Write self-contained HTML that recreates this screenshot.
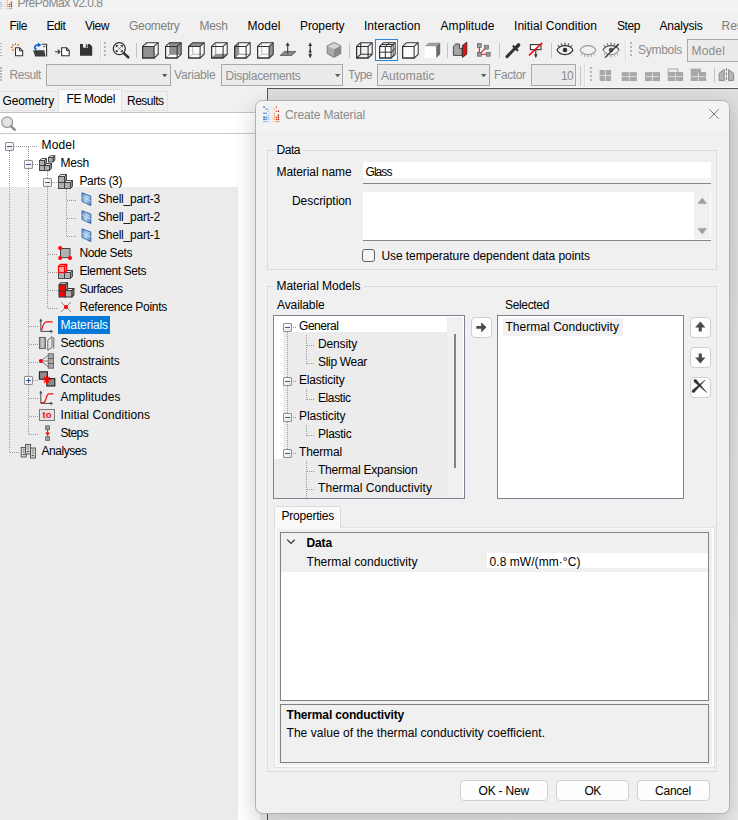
<!DOCTYPE html>
<html lang="en"><head><meta charset="utf-8"><title>PrePoMax v2.0.8</title>
<style>
html,body{margin:0;padding:0;}
body{width:738px;height:820px;overflow:hidden;background:#f0f0f0;position:relative;font-family:"Liberation Sans", sans-serif;font-size:12px;}
.b{position:absolute;box-sizing:border-box;}
.t{position:absolute;white-space:pre;line-height:16px;font-size:12px;}
</style></head>
<body>
<div class="b" style="left:0px;top:0px;width:738px;height:14px;background:#f3f3f3;"></div>
<span class="t" style="left:17.5px;top:-5.5px;color:#868686;letter-spacing:-0.470px;">PrePoMax v2.0.8</span>
<span class="t" style="left:9.5px;top:18px;color:#000;letter-spacing:-0.461px;">File</span>
<span class="t" style="left:46.5px;top:18px;color:#000;letter-spacing:-0.422px;">Edit</span>
<span class="t" style="left:85px;top:18px;color:#000;letter-spacing:-0.449px;">View</span>
<span class="t" style="left:129px;top:18px;color:#7f7f7f;letter-spacing:-0.273px;">Geometry</span>
<span class="t" style="left:199.5px;top:18px;color:#7f7f7f;letter-spacing:-0.336px;">Mesh</span>
<span class="t" style="left:247.5px;top:18px;color:#000;letter-spacing:0.062px;">Model</span>
<span class="t" style="left:300px;top:18px;color:#000;letter-spacing:-0.107px;">Property</span>
<span class="t" style="left:364px;top:18px;color:#000;letter-spacing:0.041px;">Interaction</span>
<span class="t" style="left:440.5px;top:18px;color:#000;letter-spacing:0.069px;">Amplitude</span>
<span class="t" style="left:514px;top:18px;color:#000;letter-spacing:0.055px;">Initial Condition</span>
<span class="t" style="left:617px;top:18px;color:#000;letter-spacing:-0.422px;">Step</span>
<span class="t" style="left:659.5px;top:18px;color:#000;letter-spacing:-0.211px;">Analysis</span>
<span class="t" style="left:721.5px;top:18px;color:#7f7f7f;letter-spacing:-0.002px;">Results</span>
<span class="t" style="left:9.5px;top:67px;color:#8c8c8c;letter-spacing:-0.419px;">Result</span>
<div class="b" style="left:46px;top:64px;width:125px;height:22px;background:#ebebeb;border:1px solid #a9a9a9;"></div>
<span class="t" style="left:174px;top:67px;color:#8c8c8c;letter-spacing:-0.205px;">Variable</span>
<div class="b" style="left:221px;top:64px;width:122px;height:22px;background:#ebebeb;border:1px solid #a9a9a9;"></div>
<span class="t" style="left:225.5px;top:68px;color:#8c8c8c;letter-spacing:-0.285px;">Displacements</span>
<span class="t" style="left:348px;top:67px;color:#8c8c8c;letter-spacing:-0.504px;">Type</span>
<div class="b" style="left:377px;top:64px;width:113px;height:22px;background:#ebebeb;border:1px solid #a9a9a9;"></div>
<span class="t" style="left:381px;top:68px;color:#8c8c8c;letter-spacing:0.016px;">Automatic</span>
<span class="t" style="left:494px;top:67px;color:#8c8c8c;letter-spacing:-0.419px;">Factor</span>
<div class="b" style="left:531px;top:64px;width:45px;height:22px;background:#ebebeb;border:1px solid #a9a9a9;"></div>
<span class="t" style="left:561px;top:68px;color:#8c8c8c;letter-spacing:-0.680px;">10</span>
<span class="t" style="left:638px;top:42px;color:#8c8c8c;letter-spacing:-0.288px;">Symbols</span>
<div class="b" style="left:687px;top:39px;width:60px;height:23px;background:#ebebeb;border:1px solid #a9a9a9;"></div>
<span class="t" style="left:691.5px;top:43px;color:#8c8c8c;letter-spacing:0.163px;">Model</span>
<div class="b" style="left:267px;top:87px;width:480px;height:1px;background:#fafafa;"></div>
<div class="b" style="left:267px;top:88px;width:480px;height:740px;background:linear-gradient(#dedede,#e5e5e5 50%,#ececec);border:1px solid #555;"></div>
<div class="b" style="left:-1px;top:91px;width:60px;height:20px;background:#f0f0f0;border:1px solid #e2e2e2;"></div>
<div class="b" style="left:121px;top:91px;width:47px;height:20px;background:#f0f0f0;border:1px solid #e2e2e2;"></div>
<div class="b" style="left:0px;top:112px;width:267px;height:1px;background:#c4c4c4;"></div>
<div class="b" style="left:58px;top:89px;width:64px;height:22.5px;background:#fafafa;border:1px solid #e0e0e0;border-bottom:none;"></div>
<span class="t" style="left:2.5px;top:93px;color:#000;letter-spacing:-0.148px;">Geometry</span>
<span class="t" style="left:66.5px;top:90.5px;color:#000;letter-spacing:-0.357px;">FE Model</span>
<span class="t" style="left:127px;top:93px;color:#000;letter-spacing:-0.502px;">Results</span>
<div class="b" style="left:0px;top:113px;width:267px;height:20px;background:#fff;"></div>
<div class="b" style="left:0px;top:133px;width:267px;height:1px;background:#c8c8c8;"></div>
<div class="b" style="left:0px;top:134px;width:267px;height:686px;background:#fff;"></div>
<div class="b" style="left:0px;top:187px;width:238px;height:633px;background:#ececec;"></div>
<div class="b" style="left:260px;top:89px;width:7px;height:731px;background:#f0f0f0;"></div>
<div class="b" style="left:58px;top:316px;width:52px;height:18px;background:#0078d7;"></div>
<span class="t" style="left:41.5px;top:137px;color:#000;letter-spacing:0.163px;">Model</span>
<span class="t" style="left:60.5px;top:155px;color:#000;letter-spacing:-0.211px;">Mesh</span>
<span class="t" style="left:79.5px;top:173px;color:#000;letter-spacing:-0.391px;">Parts (3)</span>
<span class="t" style="left:98px;top:191px;color:#000;letter-spacing:-0.227px;">Shell_part-3</span>
<span class="t" style="left:98px;top:209px;color:#000;letter-spacing:-0.227px;">Shell_part-2</span>
<span class="t" style="left:98px;top:227px;color:#000;letter-spacing:-0.227px;">Shell_part-1</span>
<span class="t" style="left:79.5px;top:245px;color:#000;letter-spacing:-0.394px;">Node Sets</span>
<span class="t" style="left:79.5px;top:263px;color:#000;letter-spacing:-0.406px;">Element Sets</span>
<span class="t" style="left:79.5px;top:281px;color:#000;letter-spacing:-0.545px;">Surfaces</span>
<span class="t" style="left:79.5px;top:299px;color:#000;letter-spacing:-0.285px;">Reference Points</span>
<span class="t" style="left:60.5px;top:317px;color:#fff;letter-spacing:-0.132px;">Materials</span>
<span class="t" style="left:60.5px;top:335px;color:#000;letter-spacing:-0.316px;">Sections</span>
<span class="t" style="left:60.5px;top:353px;color:#000;letter-spacing:-0.155px;">Constraints</span>
<span class="t" style="left:60.5px;top:371px;color:#000;letter-spacing:-0.107px;">Contacts</span>
<span class="t" style="left:60.5px;top:389px;color:#000;letter-spacing:0.062px;">Amplitudes</span>
<span class="t" style="left:60.5px;top:407px;color:#000;letter-spacing:0.080px;">Initial Conditions</span>
<span class="t" style="left:60.5px;top:425px;color:#000;letter-spacing:-0.637px;">Steps</span>
<span class="t" style="left:41.5px;top:443px;color:#000;letter-spacing:-0.463px;">Analyses</span>
<div class="b" style="left:254.5px;top:99.5px;width:475px;height:714px;background:#f0f0f0;border:1px solid #b0b0b0;border-radius:7.5px;box-shadow:0 8px 24px 0px rgba(0,0,0,0.2);overflow:hidden;"></div>
<div class="b" style="left:255.5px;top:100.5px;width:473px;height:29.5px;background:#f3f3f3;border-radius:7px;border-bottom-left-radius:0;border-bottom-right-radius:0;"></div>
<span class="t" style="left:285px;top:107px;color:#8a8a8a;letter-spacing:-0.135px;">Create Material</span>
<div class="b" style="left:267px;top:150px;width:450px;height:120px;border:1px solid #dcdcdc;"></div>
<div class="b" style="left:274px;top:143px;width:28px;height:14px;background:#f0f0f0;"></div>
<span class="t" style="left:276.5px;top:142px;color:#000;letter-spacing:-0.465px;">Data</span>
<span class="t" style="left:276.5px;top:164px;color:#000;letter-spacing:-0.079px;">Material name</span>
<div class="b" style="left:363px;top:162px;width:348px;height:22px;background:#f3f3f3;border-bottom:1px solid #858585;"></div>
<div class="b" style="left:363px;top:162px;width:348px;height:16.3px;background:#fff;"></div>
<span class="t" style="left:365.5px;top:164px;color:#000;letter-spacing:-0.938px;">Glass</span>
<span class="t" style="left:292px;top:193px;color:#000;letter-spacing:-0.048px;">Description</span>
<div class="b" style="left:363px;top:191px;width:348px;height:50px;background:#fff;border-bottom:1px solid #858585;border-top:1px solid #ececec;"></div>
<div class="b" style="left:694px;top:192px;width:16px;height:47px;background:#f0f0f0;"></div>
<div class="b" style="left:362px;top:249px;width:13px;height:13px;background:#f5f5f5;border:1px solid #606060;border-radius:3px;"></div>
<span class="t" style="left:381.5px;top:248px;color:#000;letter-spacing:-0.081px;">Use temperature dependent data points</span>
<div class="b" style="left:267px;top:286px;width:450px;height:486px;border:1px solid #dcdcdc;"></div>
<div class="b" style="left:274px;top:279px;width:89px;height:14px;background:#f0f0f0;"></div>
<span class="t" style="left:276.5px;top:278px;color:#000;letter-spacing:-0.047px;">Material Models</span>
<span class="t" style="left:277px;top:297px;color:#000;letter-spacing:-0.109px;">Available</span>
<span class="t" style="left:505px;top:297px;color:#000;letter-spacing:-0.338px;">Selected</span>
<div class="b" style="left:273px;top:315px;width:192px;height:184px;background:#fff;border:1px solid #7b8292;"></div>
<div class="b" style="left:447px;top:317px;width:16px;height:181px;background:#f0f0f0;"></div>
<div class="b" style="left:274px;top:332px;width:173px;height:166px;background:#ececec;"></div>
<div class="b" style="left:274px;top:316px;width:9px;height:143px;background:#fff;"></div>
<div class="b" style="left:454px;top:334px;width:2px;height:134px;background:#848484;"></div>
<span class="t" style="left:299px;top:318px;color:#000;letter-spacing:-0.458px;">General</span>
<span class="t" style="left:318px;top:336px;color:#000;letter-spacing:-0.145px;">Density</span>
<span class="t" style="left:318px;top:354px;color:#000;letter-spacing:-0.311px;">Slip Wear</span>
<span class="t" style="left:299px;top:372px;color:#000;letter-spacing:-0.184px;">Elasticity</span>
<span class="t" style="left:318px;top:390px;color:#000;letter-spacing:-0.406px;">Elastic</span>
<span class="t" style="left:299px;top:408px;color:#000;letter-spacing:-0.084px;">Plasticity</span>
<span class="t" style="left:318px;top:426px;color:#000;letter-spacing:-0.263px;">Plastic</span>
<span class="t" style="left:299px;top:444px;color:#000;letter-spacing:-0.145px;">Thermal</span>
<span class="t" style="left:318px;top:462px;color:#000;letter-spacing:-0.229px;">Thermal Expansion</span>
<span class="t" style="left:318px;top:480px;color:#000;letter-spacing:0.064px;">Thermal Conductivity</span>
<div class="b" style="left:470.5px;top:316.5px;width:21px;height:21px;background:#fdfdfd;border:1px solid #d0d0d0;border-radius:4px;"></div>
<div class="b" style="left:497px;top:315px;width:187px;height:184px;background:#fff;border:1px solid #7b8292;"></div>
<div class="b" style="left:502.5px;top:318px;width:120px;height:17.5px;background:#f0f0f0;"></div>
<span class="t" style="left:505.5px;top:319px;color:#000;letter-spacing:0.039px;">Thermal Conductivity</span>
<div class="b" style="left:689.5px;top:316.5px;width:21px;height:21px;background:#fdfdfd;border:1px solid #d0d0d0;border-radius:4px;"></div>
<div class="b" style="left:689.5px;top:347px;width:21px;height:21px;background:#fdfdfd;border:1px solid #d0d0d0;border-radius:4px;"></div>
<div class="b" style="left:689.5px;top:376.5px;width:21px;height:21px;background:#fdfdfd;border:1px solid #d0d0d0;border-radius:4px;"></div>
<div class="b" style="left:274px;top:527px;width:441px;height:241px;background:#fafafa;border:1px solid #e2e2e2;"></div>
<div class="b" style="left:277px;top:529px;width:435px;height:236px;background:#f0f0f0;"></div>
<div class="b" style="left:274px;top:506px;width:67px;height:22px;background:#f9f9f9;border:1px solid #dcdcdc;border-bottom:none;"></div>
<span class="t" style="left:281.5px;top:508px;color:#000;letter-spacing:-0.220px;">Properties</span>
<div class="b" style="left:280px;top:532px;width:429px;height:169px;background:#fff;border:1px solid #828282;"></div>
<div class="b" style="left:281px;top:533px;width:427px;height:39px;background:#f0f0f0;"></div>
<div class="b" style="left:487px;top:553px;width:221px;height:15px;background:#fff;"></div>
<span class="t" style="left:306.5px;top:535px;color:#000;font-weight:bold;letter-spacing:-0.129px;">Data</span>
<span class="t" style="left:306.5px;top:554px;color:#000;letter-spacing:0.048px;">Thermal conductivity</span>
<span class="t" style="left:489.5px;top:554px;color:#000;letter-spacing:0.062px;">0.8 mW/(mm·°C)</span>
<div class="b" style="left:280px;top:704px;width:429px;height:59px;background:#f0f0f0;border:1px solid #828282;"></div>
<span class="t" style="left:286.5px;top:707px;color:#000;font-weight:bold;letter-spacing:-0.160px;">Thermal conductivity</span>
<span class="t" style="left:286.5px;top:725px;color:#000;letter-spacing:0.052px;">The value of the thermal conductivity coefficient.</span>
<div class="b" style="left:460px;top:780px;width:87.5px;height:20.5px;background:#fdfdfd;border:1px solid #d0d0d0;border-radius:4px;"></div>
<span class="t" style="left:478.5px;top:783px;color:#000;letter-spacing:-0.189px;">OK - New</span>
<div class="b" style="left:556px;top:780px;width:72.5px;height:20.5px;background:#fdfdfd;border:1px solid #d0d0d0;border-radius:4px;"></div>
<span class="t" style="left:584.5px;top:783px;color:#000;letter-spacing:-0.672px;">OK</span>
<div class="b" style="left:637px;top:780px;width:72.5px;height:20.5px;background:#fdfdfd;border:1px solid #d0d0d0;border-radius:4px;"></div>
<span class="t" style="left:655px;top:783px;color:#000;letter-spacing:-0.227px;">Cancel</span>
<div class="b" style="left:0px;top:42.5px;width:2px;height:1.5px;background:#b8b8b8;"></div>
<div class="b" style="left:0px;top:45.5px;width:2px;height:1.5px;background:#b8b8b8;"></div>
<div class="b" style="left:0px;top:48.5px;width:2px;height:1.5px;background:#b8b8b8;"></div>
<div class="b" style="left:0px;top:51.5px;width:2px;height:1.5px;background:#b8b8b8;"></div>
<div class="b" style="left:0px;top:54.5px;width:2px;height:1.5px;background:#b8b8b8;"></div>
<div class="b" style="left:100px;top:40px;width:1px;height:21px;background:#dadada;"></div>
<div class="b" style="left:101px;top:40px;width:1px;height:21px;background:#fbfbfb;"></div>
<div class="b" style="left:104px;top:42px;width:2px;height:2px;background:#b4b4b4;"></div>
<div class="b" style="left:104px;top:46px;width:2px;height:2px;background:#b4b4b4;"></div>
<div class="b" style="left:104px;top:50px;width:2px;height:2px;background:#b4b4b4;"></div>
<div class="b" style="left:104px;top:54px;width:2px;height:2px;background:#b4b4b4;"></div>
<div class="b" style="left:136px;top:43px;width:1px;height:15px;background:#c4c4c4;"></div>
<div class="b" style="left:349px;top:43px;width:1px;height:15px;background:#c4c4c4;"></div>
<div class="b" style="left:447px;top:43px;width:1px;height:15px;background:#c4c4c4;"></div>
<div class="b" style="left:499px;top:43px;width:1px;height:15px;background:#c4c4c4;"></div>
<div class="b" style="left:551px;top:43px;width:1px;height:15px;background:#c4c4c4;"></div>
<div class="b" style="left:625px;top:39px;width:1px;height:22px;background:#dadada;"></div>
<div class="b" style="left:626px;top:39px;width:1px;height:22px;background:#fbfbfb;"></div>
<div class="b" style="left:629.5px;top:42px;width:2px;height:2px;background:#b4b4b4;"></div>
<div class="b" style="left:629.5px;top:46px;width:2px;height:2px;background:#b4b4b4;"></div>
<div class="b" style="left:629.5px;top:50px;width:2px;height:2px;background:#b4b4b4;"></div>
<div class="b" style="left:629.5px;top:54px;width:2px;height:2px;background:#b4b4b4;"></div>
<div class="b" style="left:0px;top:67px;width:2px;height:1.5px;background:#b8b8b8;"></div>
<div class="b" style="left:0px;top:70px;width:2px;height:1.5px;background:#b8b8b8;"></div>
<div class="b" style="left:0px;top:73px;width:2px;height:1.5px;background:#b8b8b8;"></div>
<div class="b" style="left:0px;top:76px;width:2px;height:1.5px;background:#b8b8b8;"></div>
<div class="b" style="left:0px;top:79px;width:2px;height:1.5px;background:#b8b8b8;"></div>
<div class="b" style="left:580px;top:66px;width:1px;height:20px;background:#c8c8c8;"></div>
<div class="b" style="left:585px;top:63px;width:1px;height:24px;background:#fbfbfb;"></div>
<div class="b" style="left:584px;top:63px;width:1px;height:24px;background:#dadada;"></div>
<div class="b" style="left:589.5px;top:67px;width:2px;height:2px;background:#b4b4b4;"></div>
<div class="b" style="left:589.5px;top:71px;width:2px;height:2px;background:#b4b4b4;"></div>
<div class="b" style="left:589.5px;top:75px;width:2px;height:2px;background:#b4b4b4;"></div>
<div class="b" style="left:589.5px;top:79px;width:2px;height:2px;background:#b4b4b4;"></div>
<div class="b" style="left:713.5px;top:68px;width:1px;height:15px;background:#c4c4c4;"></div>
<svg class="b" style="left:9px;top:42px;" width="16" height="16" viewBox="0 0 16 16"><path d="M6.5 5.8h4.2l3 3v5h-7.2z" fill="#fdfdfd" stroke="#333333" stroke-width="1.05" stroke-linejoin="round"/><path d="M10.6 5.8v3.1h3.1" fill="none" stroke="#333333" stroke-width="1"/>
<g stroke="#d87412" stroke-width="1.15" stroke-linecap="round"><path d="M6.4 1.5v1.1M3.5 2.6l.9.9M9.5 2.3l-.9 1M2.2 5.4h1.1M3.5 8.3l.8-1"/></g></svg>
<svg class="b" style="left:32px;top:42px;" width="16" height="16" viewBox="0 0 16 16"><path d="M9.8 2.3h4.8v12.2" fill="none" stroke="#333333" stroke-width="1.1"/><path d="M11.4 4.6h1.8" stroke="#333333" stroke-width="1"/>
<polygon points="1.1,8.2 12.3,8.2 13.5,14.6 3.2,14.6" fill="#3c3c3c"/>
<path d="M4.4 7.4C1.4 5.6 2.8 2.9 6.2 2.9" fill="none" stroke="#1460c8" stroke-width="1.7"/><path d="M5.9 .6l3.5 2.3-3.5 2.4z" fill="#1460c8"/></svg>
<svg class="b" style="left:55px;top:42px;" width="16" height="16" viewBox="0 0 16 16"><path d="M6.6 5.8h5l2.6 2.6v5.4h-7.6z" fill="#fff" stroke="#333333" stroke-width="1.1"/><path d="M11.4 5.8v2.8h2.8" fill="none" stroke="#333333" stroke-width="1"/>
<path d="M0 9.7h4.6M2.8 7.6l2.1 2.1-2.1 2.1" fill="none" stroke="#333333" stroke-width="1.1"/></svg>
<svg class="b" style="left:78px;top:42px;" width="16" height="16" viewBox="0 0 16 16"><path d="M2 2h9.6l2.6 2.6v9.2h-12.2z" fill="#333333"/><rect x="5" y="2" width="5" height="3.6" fill="#f0f0f0"/><rect x="7.8" y="2.4" width="1.6" height="2.8" fill="#333333"/></svg>
<svg class="b" style="left:111px;top:41px;" width="19" height="18" viewBox="0 0 19 18"><circle cx="8.3" cy="7.6" r="6" fill="#f6f6f6" stroke="#333333" stroke-width="1.3"/><path d="M12.8 12.1l4.4 4.2" stroke="#333333" stroke-width="2.6" stroke-linecap="round"/>
<path d="M6.3 5.6L10.3 9.6M10.3 5.6L6.3 9.6" stroke="#777" stroke-width="0.8"/><path d="M4.8 4.1L7.5 4.1L4.8 6.8ZM4.8 11.1L7.5 11.1L4.8 8.4ZM11.8 4.1L9.1 4.1L11.8 6.8ZM11.8 11.1L9.1 11.1L11.8 8.4Z" fill="#333333"/></svg>
<div class="b" style="left:375px;top:39px;width:23px;height:22px;background:#f1f6fb;border:1px solid #2a8ad8;"></div>
<svg class="b" style="left:141.70000000000002px;top:41.5px;" width="18" height="18" viewBox="0 0 18 18"><polygon points="0.6,4.4 4.699999999999999,0.7000000000000002 16.2,0.7000000000000002 16.2,12.3 12.1,16.0 0.6,16.0" fill="#fbfbfb" stroke="none"/><path d="M4.699999999999999 0.7000000000000002V12.3H16.2M4.699999999999999 12.3L0.6 16.0" fill="none" stroke="#b4b4b4" stroke-width="0.9"/><polygon points="0.6,4.4 12.1,4.4 12.1,16.0 0.6,16.0" fill="#909090"/><g fill="none" stroke="#333333" stroke-width="1.05" stroke-linejoin="round"><polygon points="0.6,4.4 12.1,4.4 12.1,16.0 0.6,16.0"/><polygon points="0.6,4.4 4.699999999999999,0.7000000000000002 16.2,0.7000000000000002 16.2,12.3 12.1,16.0 0.6,16.0"/><path d="M12.1 4.4L16.2 0.7000000000000002"/></g></svg>
<svg class="b" style="left:164.8px;top:41.5px;" width="18" height="18" viewBox="0 0 18 18"><polygon points="0.6,4.4 4.699999999999999,0.7000000000000002 16.2,0.7000000000000002 16.2,12.3 12.1,16.0 0.6,16.0" fill="#fbfbfb" stroke="none"/><polygon points="4.699999999999999,0.7000000000000002 16.2,0.7000000000000002 16.2,12.3 4.699999999999999,12.3" fill="#909090"/><path d="M4.699999999999999 0.7000000000000002V12.3H16.2M4.699999999999999 12.3L0.6 16.0" fill="none" stroke="#8a8a8a" stroke-width="0.9"/><g fill="none" stroke="#333333" stroke-width="1.05" stroke-linejoin="round"><polygon points="0.6,4.4 12.1,4.4 12.1,16.0 0.6,16.0"/><polygon points="0.6,4.4 4.699999999999999,0.7000000000000002 16.2,0.7000000000000002 16.2,12.3 12.1,16.0 0.6,16.0"/><path d="M12.1 4.4L16.2 0.7000000000000002"/></g></svg>
<svg class="b" style="left:187.8px;top:41.5px;" width="18" height="18" viewBox="0 0 18 18"><polygon points="0.6,4.4 4.699999999999999,0.7000000000000002 16.2,0.7000000000000002 16.2,12.3 12.1,16.0 0.6,16.0" fill="#fbfbfb" stroke="none"/><path d="M4.699999999999999 0.7000000000000002V12.3H16.2M4.699999999999999 12.3L0.6 16.0" fill="none" stroke="#b4b4b4" stroke-width="0.9"/><polygon points="0.6,4.4 4.699999999999999,0.7000000000000002 16.2,0.7000000000000002 12.1,4.4" fill="#909090"/><g fill="none" stroke="#333333" stroke-width="1.05" stroke-linejoin="round"><polygon points="0.6,4.4 12.1,4.4 12.1,16.0 0.6,16.0"/><polygon points="0.6,4.4 4.699999999999999,0.7000000000000002 16.2,0.7000000000000002 16.2,12.3 12.1,16.0 0.6,16.0"/><path d="M12.1 4.4L16.2 0.7000000000000002"/></g></svg>
<svg class="b" style="left:210.8px;top:41.5px;" width="18" height="18" viewBox="0 0 18 18"><polygon points="0.6,4.4 4.699999999999999,0.7000000000000002 16.2,0.7000000000000002 16.2,12.3 12.1,16.0 0.6,16.0" fill="#fbfbfb" stroke="none"/><polygon points="0.6,16.0 4.699999999999999,12.3 16.2,12.3 12.1,16.0" fill="#909090"/><path d="M4.699999999999999 0.7000000000000002V12.3H16.2M4.699999999999999 12.3L0.6 16.0" fill="none" stroke="#8a8a8a" stroke-width="0.9"/><g fill="none" stroke="#333333" stroke-width="1.05" stroke-linejoin="round"><polygon points="0.6,4.4 12.1,4.4 12.1,16.0 0.6,16.0"/><polygon points="0.6,4.4 4.699999999999999,0.7000000000000002 16.2,0.7000000000000002 16.2,12.3 12.1,16.0 0.6,16.0"/><path d="M12.1 4.4L16.2 0.7000000000000002"/></g></svg>
<svg class="b" style="left:233.9px;top:41.5px;" width="18" height="18" viewBox="0 0 18 18"><polygon points="0.6,4.4 4.699999999999999,0.7000000000000002 16.2,0.7000000000000002 16.2,12.3 12.1,16.0 0.6,16.0" fill="#fbfbfb" stroke="none"/><polygon points="0.6,4.4 4.699999999999999,0.7000000000000002 4.699999999999999,12.3 0.6,16.0" fill="#909090"/><path d="M4.699999999999999 0.7000000000000002V12.3H16.2M4.699999999999999 12.3L0.6 16.0" fill="none" stroke="#8a8a8a" stroke-width="0.9"/><g fill="none" stroke="#333333" stroke-width="1.05" stroke-linejoin="round"><polygon points="0.6,4.4 12.1,4.4 12.1,16.0 0.6,16.0"/><polygon points="0.6,4.4 4.699999999999999,0.7000000000000002 16.2,0.7000000000000002 16.2,12.3 12.1,16.0 0.6,16.0"/><path d="M12.1 4.4L16.2 0.7000000000000002"/></g></svg>
<svg class="b" style="left:256.9px;top:41.5px;" width="18" height="18" viewBox="0 0 18 18"><polygon points="0.6,4.4 4.699999999999999,0.7000000000000002 16.2,0.7000000000000002 16.2,12.3 12.1,16.0 0.6,16.0" fill="#fbfbfb" stroke="none"/><path d="M4.699999999999999 0.7000000000000002V12.3H16.2M4.699999999999999 12.3L0.6 16.0" fill="none" stroke="#b4b4b4" stroke-width="0.9"/><polygon points="12.1,4.4 16.2,0.7000000000000002 16.2,12.3 12.1,16.0" fill="#909090"/><g fill="none" stroke="#333333" stroke-width="1.05" stroke-linejoin="round"><polygon points="0.6,4.4 12.1,4.4 12.1,16.0 0.6,16.0"/><polygon points="0.6,4.4 4.699999999999999,0.7000000000000002 16.2,0.7000000000000002 16.2,12.3 12.1,16.0 0.6,16.0"/><path d="M12.1 4.4L16.2 0.7000000000000002"/></g></svg>
<svg class="b" style="left:355.59999999999997px;top:41.5px;" width="18" height="18" viewBox="0 0 18 18"><path d="M4.699999999999999 0.7000000000000002V12.3H16.2M4.699999999999999 12.3L0.6 16.0" fill="none" stroke="#333333" stroke-width="1.1"/><g fill="none" stroke="#333333" stroke-width="1.05" stroke-linejoin="round"><polygon points="0.6,4.4 12.1,4.4 12.1,16.0 0.6,16.0"/><polygon points="0.6,4.4 4.699999999999999,0.7000000000000002 16.2,0.7000000000000002 16.2,12.3 12.1,16.0 0.6,16.0"/><path d="M12.1 4.4L16.2 0.7000000000000002"/></g></svg>
<svg class="b" style="left:378.59999999999997px;top:41.5px;" width="18" height="18" viewBox="0 0 18 18"><polygon points="0.6,4.4 4.699999999999999,0.7000000000000002 16.2,0.7000000000000002 16.2,12.3 12.1,16.0 0.6,16.0" fill="#fbfbfb" stroke="none"/><g fill="none" stroke="#333333" stroke-width="1"><path d="M6.35 4.4v11.6M0.6 10.2h11.5M6.35 4.4l4.1 -3.7M2.65 2.5500000000000003h11.5M12.1 10.2l4.1 -3.7M14.149999999999999 2.5500000000000003v11.6"/></g><g fill="none" stroke="#333333" stroke-width="1.05" stroke-linejoin="round"><polygon points="0.6,4.4 12.1,4.4 12.1,16.0 0.6,16.0"/><polygon points="0.6,4.4 4.699999999999999,0.7000000000000002 16.2,0.7000000000000002 16.2,12.3 12.1,16.0 0.6,16.0"/><path d="M12.1 4.4L16.2 0.7000000000000002"/></g></svg>
<svg class="b" style="left:401.59999999999997px;top:41.5px;" width="18" height="18" viewBox="0 0 18 18"><polygon points="0.6,4.4 4.699999999999999,0.7000000000000002 16.2,0.7000000000000002 16.2,12.3 12.1,16.0 0.6,16.0" fill="#fbfbfb" stroke="none"/><g fill="none" stroke="#333333" stroke-width="1.05" stroke-linejoin="round"><polygon points="0.6,4.4 12.1,4.4 12.1,16.0 0.6,16.0"/><polygon points="0.6,4.4 4.699999999999999,0.7000000000000002 16.2,0.7000000000000002 16.2,12.3 12.1,16.0 0.6,16.0"/><path d="M12.1 4.4L16.2 0.7000000000000002"/></g></svg>
<svg class="b" style="left:424.2px;top:41.5px;" width="18" height="18" viewBox="0 0 18 18"><polygon points="0.6,4.4 4.699999999999999,0.7000000000000002 16.2,0.7000000000000002 12.1,4.4" fill="#9c9c9c"/><polygon points="12.1,4.4 16.2,0.7000000000000002 16.2,12.3 12.1,16.0" fill="#6c6c6c"/><polygon points="0.6,4.4 12.1,4.4 12.1,16.0 0.6,16.0" fill="#fff"/></svg>
<svg class="b" style="left:279px;top:41px;" width="18" height="18" viewBox="0 0 18 18"><polygon points="1.2,14.4 12.8,14.4 16.8,10.6 5.2,10.6" fill="#8c8c8c" stroke="#4a4a4a" stroke-width="0.8"/><path d="M8.7 12.6V3.4" stroke="#333333" stroke-width="1.1"/><path d="M8.7 1.2l2 3.6h-4z" fill="#333333"/></svg>
<svg class="b" style="left:305px;top:41px;" width="10" height="18" viewBox="0 0 10 18"><path d="M5.2 2.5v14" stroke="#333333" stroke-width="1.1"/><path d="M5.2 1.4l1.9 3.6h-3.8zM5.2 16.9l1.9-3.6h-3.8zM5.2 8.2l1.7 3h-3.4z" fill="#333333"/></svg>
<svg class="b" style="left:325px;top:41px;" width="18" height="18" viewBox="0 0 18 18"><polygon points="9,1.4 15.8,4.8 9,8.2 2.2,4.8" fill="#d4d4d4"/><polygon points="2.2,4.8 9,8.2 9,16.4 2.2,12.6" fill="#aaaaaa"/><polygon points="15.8,4.8 9,8.2 9,16.4 15.8,12.6" fill="#8a8a8a"/><polygon points="9,1.4 15.8,4.8 15.8,12.6 9,16.4 2.2,12.6 2.2,4.8" fill="none" stroke="#7c7c7c" stroke-width="0.9"/></svg>
<svg class="b" style="left:452px;top:41px;" width="16" height="18" viewBox="0 0 16 18"><path d="M1.4 14.4V5.2l2.2-2.2h4v4.4h2.6v7z" fill="#a4a4a4" stroke="#4a4a4a" stroke-width="1"/><polygon points="10.4,4.4 14.8,1.2 14.8,13.2 10.4,16.4" fill="#ee1111" stroke="#222" stroke-width="0.8"/></svg>
<svg class="b" style="left:476px;top:42px;" width="16" height="16" viewBox="0 0 16 16"><path d="M3.3 12.3V3.6M3.3 12.3h9.4M3.3 12.3L10.4 5.4" stroke="#ee1111" stroke-width="1.1" fill="none"/>
<g fill="#9a9a9a" stroke="#6a6a6a" stroke-width="0.8"><rect x="1.4" y="1.6" width="3.8" height="3.8"/><rect x="8.5" y="3.3" width="3.8" height="3.8"/><rect x="1.4" y="10.4" width="3.8" height="3.8"/><rect x="10.4" y="10.4" width="3.8" height="3.8"/></g></svg>
<svg class="b" style="left:504px;top:41px;" width="18" height="18" viewBox="0 0 18 18"><path d="M3 15.6l7.6-7.8" stroke="#333333" stroke-width="3" stroke-linecap="round"/><path d="M9.4 5.2l4 4" stroke="#333333" stroke-width="2.2" stroke-linecap="round"/><path d="M11.4 7.2l3.2-3.2" stroke="#333333" stroke-width="3.6" stroke-linecap="round"/></svg>
<svg class="b" style="left:528px;top:41px;" width="16" height="18" viewBox="0 0 16 18"><rect x="2.4" y="3.6" width="10.6" height="5" fill="#fff" stroke="#333333" stroke-width="1.1"/><path d="M7.8 8.6v8" stroke="#333333" stroke-width="1.1"/><path d="M7.8 16.4l-1.8-3.2h3.6z" fill="#333333"/><path d="M1 14.4L14.2 1.8" stroke="#ee1111" stroke-width="1.6"/></svg>
<svg class="b" style="left:556.2px;top:41px;" width="18" height="18" viewBox="0 0 18 18"><path d="M1 9C4 15 14 15 17 9" fill="none" stroke="#333333" stroke-width="1.25"/><path d="M1 9C4 3 14 3 17 9" fill="none" stroke="#333333" stroke-width="1.25"/><circle cx="9" cy="9" r="2.3" fill="#333333"/><path d="M3.4 6l-1.6-2M6.1 4.8l-.9-2.5M9 4.4v-2.7M11.9 4.8l.9-2.5M14.6 6l1.6-2" stroke="#333333" stroke-width="1"/></svg>
<svg class="b" style="left:579px;top:41px;" width="18" height="18" viewBox="0 0 18 18"><path d="M1 9C4 15 14 15 17 9" fill="none" stroke="#9c9c9c" stroke-width="1.25"/><path d="M1 9C4 3 14 3 17 9" fill="none" stroke="#9c9c9c" stroke-width="1.25"/><path d="M3.4 12.4l-1.4 1.9M6.1 13.4l-.8 2.4M9 13.8v2.6M11.9 13.4l.8 2.4M14.6 12.4l1.4 1.9" stroke="#9c9c9c" stroke-width="1"/></svg>
<svg class="b" style="left:602px;top:41px;" width="18" height="18" viewBox="0 0 18 18"><path d="M1 9C4 15 14 15 17 9" fill="none" stroke="#9c9c9c" stroke-width="1.25"/><path d="M1 9C4 3 14 3 17 9" fill="none" stroke="#555" stroke-width="1.25"/><circle cx="9" cy="9" r="2.3" fill="#555"/><path d="M3.4 6l-1.6-2M6.1 4.8l-.9-2.5M9 4.4v-2.7M11.9 4.8l.9-2.5M14.6 6l1.6-2" stroke="#555" stroke-width="1"/><path d="M3.4 12.4l-1.4 1.9M6.1 13.4l-.8 2.4M9 13.8v2.6M11.9 13.4l.8 2.4M14.6 12.4l1.4 1.9" stroke="#9c9c9c" stroke-width="1"/><path d="M3 16.6L16.6 3" stroke="#333333" stroke-width="1.3"/></svg>
<svg class="b" style="left:599px;top:69px;" width="13" height="13" viewBox="0 0 13 13"><rect x="0.7" y="1" width="11.4" height="11" fill="#a8a8a8"/><path d="M6.4 1v11M.7 6.5h11.4" stroke="#dcdcdc" stroke-width="1"/></svg>
<svg class="b" style="left:621px;top:71px;" width="17" height="11" viewBox="0 0 17 11"><rect x="0.7" y="1.1" width="15.2" height="9" fill="#a8a8a8"/><path d="M8.3 1v9M.7 5.6h15.2" stroke="#dcdcdc" stroke-width="1"/></svg>
<svg class="b" style="left:644px;top:71px;" width="17" height="11" viewBox="0 0 17 11"><rect x="1" y="1.1" width="15" height="9" fill="#a8a8a8"/><path d="M8.5 2v8M2 5.6h13" stroke="#dcdcdc" stroke-width="1"/></svg>
<svg class="b" style="left:667px;top:68px;" width="17" height="14" viewBox="0 0 17 14"><rect x="0.7" y="4" width="15.4" height="9" fill="#a8a8a8"/><rect x="1.2" y="1" width="9.6" height="3.4" fill="#f0f0f0" stroke="#a8a8a8" stroke-width="1"/><path d="M8.4 5v8M1.4 8.6h14" stroke="#dcdcdc" stroke-width="1"/></svg>
<svg class="b" style="left:690px;top:68px;" width="17" height="14" viewBox="0 0 17 14"><rect x="0.7" y="4" width="15.4" height="9" fill="#a8a8a8"/><rect x="0.7" y="0.6" width="10.4" height="4" fill="#a8a8a8"/><path d="M8.4 5v8M1.4 8.6h14" stroke="#dcdcdc" stroke-width="1"/></svg>
<svg class="b" style="left:718px;top:68px;" width="17" height="14" viewBox="0 0 17 14"><path d="M1.2 12.6V5.2l5-3.6v11zM15.6 12.6V5.2l-5-3.6v11z" fill="#b4b4b4" stroke="#8a8a8a" stroke-width="1"/><path d="M8.4 0v14" stroke="#7a7a7a" stroke-width="1" stroke-dasharray="3 1.5"/></svg>
<svg class="b" style="left:0px;top:115px;" width="17" height="17" viewBox="0 0 17 17"><circle cx="7.2" cy="7.2" r="5.4" fill="#e4e4e4" stroke="#9a9a9a" stroke-width="1.3"/><path d="M11.2 11.4l3.6 3.4" stroke="#8a8a8a" stroke-width="2.4" stroke-linecap="round"/></svg>
<div class="b" style="left:9px;top:151px;width:1px;height:301px;background-image:repeating-linear-gradient(180deg,#9a9a9a 0 1px,transparent 1px 2px);"></div>
<div class="b" style="left:14px;top:146px;width:23px;height:1px;background-image:repeating-linear-gradient(90deg,#9a9a9a 0 1px,transparent 1px 2px);"></div>
<div class="b" style="left:10px;top:452px;width:10px;height:1px;background-image:repeating-linear-gradient(90deg,#9a9a9a 0 1px,transparent 1px 2px);"></div>
<div class="b" style="left:28px;top:147px;width:1px;height:13px;background-image:repeating-linear-gradient(180deg,#9a9a9a 0 1px,transparent 1px 2px);"></div>
<div class="b" style="left:28px;top:169px;width:1px;height:265px;background-image:repeating-linear-gradient(180deg,#9a9a9a 0 1px,transparent 1px 2px);"></div>
<div class="b" style="left:29px;top:326px;width:9px;height:1px;background-image:repeating-linear-gradient(90deg,#9a9a9a 0 1px,transparent 1px 2px);"></div>
<div class="b" style="left:29px;top:344px;width:9px;height:1px;background-image:repeating-linear-gradient(90deg,#9a9a9a 0 1px,transparent 1px 2px);"></div>
<div class="b" style="left:29px;top:362px;width:9px;height:1px;background-image:repeating-linear-gradient(90deg,#9a9a9a 0 1px,transparent 1px 2px);"></div>
<div class="b" style="left:29px;top:398px;width:9px;height:1px;background-image:repeating-linear-gradient(90deg,#9a9a9a 0 1px,transparent 1px 2px);"></div>
<div class="b" style="left:29px;top:416px;width:9px;height:1px;background-image:repeating-linear-gradient(90deg,#9a9a9a 0 1px,transparent 1px 2px);"></div>
<div class="b" style="left:29px;top:434px;width:9px;height:1px;background-image:repeating-linear-gradient(90deg,#9a9a9a 0 1px,transparent 1px 2px);"></div>
<div class="b" style="left:33px;top:164px;width:5px;height:1px;background-image:repeating-linear-gradient(90deg,#9a9a9a 0 1px,transparent 1px 2px);"></div>
<div class="b" style="left:33px;top:380px;width:5px;height:1px;background-image:repeating-linear-gradient(90deg,#9a9a9a 0 1px,transparent 1px 2px);"></div>
<div class="b" style="left:47px;top:171px;width:1px;height:7px;background-image:repeating-linear-gradient(180deg,#9a9a9a 0 1px,transparent 1px 2px);"></div>
<div class="b" style="left:47px;top:187px;width:1px;height:121px;background-image:repeating-linear-gradient(180deg,#9a9a9a 0 1px,transparent 1px 2px);"></div>
<div class="b" style="left:52px;top:182px;width:5px;height:1px;background-image:repeating-linear-gradient(90deg,#9a9a9a 0 1px,transparent 1px 2px);"></div>
<div class="b" style="left:48px;top:254px;width:10px;height:1px;background-image:repeating-linear-gradient(90deg,#9a9a9a 0 1px,transparent 1px 2px);"></div>
<div class="b" style="left:48px;top:272px;width:10px;height:1px;background-image:repeating-linear-gradient(90deg,#9a9a9a 0 1px,transparent 1px 2px);"></div>
<div class="b" style="left:48px;top:290px;width:10px;height:1px;background-image:repeating-linear-gradient(90deg,#9a9a9a 0 1px,transparent 1px 2px);"></div>
<div class="b" style="left:48px;top:308px;width:10px;height:1px;background-image:repeating-linear-gradient(90deg,#9a9a9a 0 1px,transparent 1px 2px);"></div>
<div class="b" style="left:66px;top:189px;width:1px;height:47px;background-image:repeating-linear-gradient(180deg,#9a9a9a 0 1px,transparent 1px 2px);"></div>
<div class="b" style="left:67px;top:200px;width:10px;height:1px;background-image:repeating-linear-gradient(90deg,#9a9a9a 0 1px,transparent 1px 2px);"></div>
<div class="b" style="left:67px;top:218px;width:10px;height:1px;background-image:repeating-linear-gradient(90deg,#9a9a9a 0 1px,transparent 1px 2px);"></div>
<div class="b" style="left:67px;top:236px;width:10px;height:1px;background-image:repeating-linear-gradient(90deg,#9a9a9a 0 1px,transparent 1px 2px);"></div>
<div class="b" style="left:5.0px;top:142.0px;width:9px;height:9px;background:linear-gradient(135deg,#fff,#e4e4e4);border:1px solid #919191;border-radius:1px;"></div>
<div class="b" style="left:7.0px;top:146.0px;width:5px;height:1px;background:#3c55a5;"></div>
<div class="b" style="left:24.0px;top:160.0px;width:9px;height:9px;background:linear-gradient(135deg,#fff,#e4e4e4);border:1px solid #919191;border-radius:1px;"></div>
<div class="b" style="left:26.0px;top:164.0px;width:5px;height:1px;background:#3c55a5;"></div>
<div class="b" style="left:43.0px;top:178.0px;width:9px;height:9px;background:linear-gradient(135deg,#fff,#e4e4e4);border:1px solid #919191;border-radius:1px;"></div>
<div class="b" style="left:45.0px;top:182.0px;width:5px;height:1px;background:#3c55a5;"></div>
<div class="b" style="left:24.0px;top:376.0px;width:9px;height:9px;background:linear-gradient(135deg,#fff,#e4e4e4);border:1px solid #919191;border-radius:1px;"></div>
<div class="b" style="left:26.0px;top:380.0px;width:5px;height:1px;background:#3c55a5;"></div>
<div class="b" style="left:28.0px;top:378.0px;width:1px;height:5px;background:#3c55a5;"></div>
<svg class="b" style="left:38px;top:154px;" width="18" height="18" viewBox="0 0 18 18"><polygon points="10.5,3.5 12.3,1.7 16.8,1.7 15.0,3.5" fill="#e6e6e6" stroke="#3e3e3e" stroke-width="0.9" stroke-linejoin="round"/><polygon points="15.0,3.5 16.8,1.7 16.8,6.2 15.0,8.0" fill="#8c8c8c" stroke="#3e3e3e" stroke-width="0.9" stroke-linejoin="round"/><rect x="10.5" y="3.5" width="4.5" height="4.5" fill="#b0b0b0" stroke="#3e3e3e" stroke-width="0.9"/><polygon points="1.5,11.5 3.5,9.5 8.5,9.5 6.5,11.5" fill="#e6e6e6" stroke="#3e3e3e" stroke-width="0.9" stroke-linejoin="round"/><polygon points="6.5,11.5 8.5,9.5 8.5,14.5 6.5,16.5" fill="#8c8c8c" stroke="#3e3e3e" stroke-width="0.9" stroke-linejoin="round"/><rect x="1.5" y="11.5" width="5" height="5" fill="#b0b0b0" stroke="#3e3e3e" stroke-width="0.9"/><polygon points="6.5,11.5 8.5,9.5 13.5,9.5 11.5,11.5" fill="#e6e6e6" stroke="#3e3e3e" stroke-width="0.9" stroke-linejoin="round"/><polygon points="11.5,11.5 13.5,9.5 13.5,14.5 11.5,16.5" fill="#8c8c8c" stroke="#3e3e3e" stroke-width="0.9" stroke-linejoin="round"/><rect x="6.5" y="11.5" width="5" height="5" fill="#b0b0b0" stroke="#3e3e3e" stroke-width="0.9"/><polygon points="1.5,6.5 3.5,4.5 8.5,4.5 6.5,6.5" fill="#e6e6e6" stroke="#3e3e3e" stroke-width="0.9" stroke-linejoin="round"/><polygon points="6.5,6.5 8.5,4.5 8.5,9.5 6.5,11.5" fill="#8c8c8c" stroke="#3e3e3e" stroke-width="0.9" stroke-linejoin="round"/><rect x="1.5" y="6.5" width="5" height="5" fill="#b0b0b0" stroke="#3e3e3e" stroke-width="0.9"/></svg>
<svg class="b" style="left:57px;top:173px;" width="18" height="18" viewBox="0 0 18 18"><polygon points="1.5,9.5 3.5,7.5 9.5,7.5 7.5,9.5" fill="#e6e6e6" stroke="#3e3e3e" stroke-width="0.9" stroke-linejoin="round"/><polygon points="7.5,9.5 9.5,7.5 9.5,13.5 7.5,15.5" fill="#8c8c8c" stroke="#3e3e3e" stroke-width="0.9" stroke-linejoin="round"/><rect x="1.5" y="9.5" width="6" height="6" fill="#b0b0b0" stroke="#3e3e3e" stroke-width="0.9"/><polygon points="7.5,9.5 9.5,7.5 15.5,7.5 13.5,9.5" fill="#e6e6e6" stroke="#3e3e3e" stroke-width="0.9" stroke-linejoin="round"/><polygon points="13.5,9.5 15.5,7.5 15.5,13.5 13.5,15.5" fill="#8c8c8c" stroke="#3e3e3e" stroke-width="0.9" stroke-linejoin="round"/><rect x="7.5" y="9.5" width="6" height="6" fill="#b0b0b0" stroke="#3e3e3e" stroke-width="0.9"/><polygon points="1.5,3.5 3.5,1.5 9.5,1.5 7.5,3.5" fill="#e6e6e6" stroke="#3e3e3e" stroke-width="0.9" stroke-linejoin="round"/><polygon points="7.5,3.5 9.5,1.5 9.5,7.5 7.5,9.5" fill="#8c8c8c" stroke="#3e3e3e" stroke-width="0.9" stroke-linejoin="round"/><rect x="1.5" y="3.5" width="6" height="6" fill="#b0b0b0" stroke="#3e3e3e" stroke-width="0.9"/></svg>
<svg class="b" style="left:80.5px;top:192px;" width="11" height="15" viewBox="0 0 11 15"><defs><linearGradient id="sg192" x1="0" y1="0" x2="1" y2="1"><stop offset="0" stop-color="#5a8fd4"/><stop offset="0.5" stop-color="#a9c8ea"/><stop offset="1" stop-color="#4f86cc"/></linearGradient></defs>
<polygon points="1,0.8 9.8,4 9.8,13.6 1,9.4" fill="url(#sg192)" stroke="#2c5ea0" stroke-width="0.9"/><path d="M1 5l8.8 4M5.2 2.4v9" stroke="#d6e6f6" stroke-width="0.7" fill="none"/></svg>
<svg class="b" style="left:80.5px;top:210px;" width="11" height="15" viewBox="0 0 11 15"><defs><linearGradient id="sg210" x1="0" y1="0" x2="1" y2="1"><stop offset="0" stop-color="#5a8fd4"/><stop offset="0.5" stop-color="#a9c8ea"/><stop offset="1" stop-color="#4f86cc"/></linearGradient></defs>
<polygon points="1,0.8 9.8,4 9.8,13.6 1,9.4" fill="url(#sg210)" stroke="#2c5ea0" stroke-width="0.9"/><path d="M1 5l8.8 4M5.2 2.4v9" stroke="#d6e6f6" stroke-width="0.7" fill="none"/></svg>
<svg class="b" style="left:80.5px;top:228px;" width="11" height="15" viewBox="0 0 11 15"><defs><linearGradient id="sg228" x1="0" y1="0" x2="1" y2="1"><stop offset="0" stop-color="#5a8fd4"/><stop offset="0.5" stop-color="#a9c8ea"/><stop offset="1" stop-color="#4f86cc"/></linearGradient></defs>
<polygon points="1,0.8 9.8,4 9.8,13.6 1,9.4" fill="url(#sg228)" stroke="#2c5ea0" stroke-width="0.9"/><path d="M1 5l8.8 4M5.2 2.4v9" stroke="#d6e6f6" stroke-width="0.7" fill="none"/></svg>
<svg class="b" style="left:57px;top:245px;" width="16" height="16" viewBox="0 0 16 16"><rect x="3.5" y="3.5" width="9.5" height="9.2" fill="#b0b0b0" stroke="#444" stroke-width="1"/><circle cx="3.1" cy="2.9" r="2" fill="#f00"/><circle cx="3.1" cy="12.9" r="2" fill="#f00"/><circle cx="13" cy="12.9" r="2" fill="#f00"/></svg>
<svg class="b" style="left:57px;top:263px;" width="17" height="17" viewBox="0 0 17 17"><polygon points="1.5,9.5 3.5,7.5 9.5,7.5 7.5,9.5" fill="#e6e6e6" stroke="#3e3e3e" stroke-width="0.9" stroke-linejoin="round"/><polygon points="7.5,9.5 9.5,7.5 9.5,13.5 7.5,15.5" fill="#8c8c8c" stroke="#3e3e3e" stroke-width="0.9" stroke-linejoin="round"/><rect x="1.5" y="9.5" width="6" height="6" fill="#b0b0b0" stroke="#3e3e3e" stroke-width="0.9"/><polygon points="7.5,9.5 9.5,7.5 15.5,7.5 13.5,9.5" fill="#e6e6e6" stroke="#3e3e3e" stroke-width="0.9" stroke-linejoin="round"/><polygon points="13.5,9.5 15.5,7.5 15.5,13.5 13.5,15.5" fill="#8c8c8c" stroke="#3e3e3e" stroke-width="0.9" stroke-linejoin="round"/><rect x="7.5" y="9.5" width="6" height="6" fill="#b0b0b0" stroke="#3e3e3e" stroke-width="0.9"/><polygon points="1.5,3.3 3.5,1.2999999999999998 9.7,1.2999999999999998 7.7,3.3" fill="#fff4f4" stroke="#f00" stroke-width="1.2" stroke-linejoin="round"/><polygon points="7.7,3.3 9.7,1.2999999999999998 9.7,7.5 7.7,9.5" fill="#ffe0e0" stroke="#f00" stroke-width="1.2" stroke-linejoin="round"/><rect x="1.5" y="3.3" width="6.2" height="6.2" fill="#ffa4a4" stroke="#f00" stroke-width="1.2"/></svg>
<svg class="b" style="left:57px;top:281px;" width="18" height="17" viewBox="0 0 18 17"><polygon points="2,9.6 4.1,7.5 10.5,7.5 8.4,9.6" fill="#e6e6e6" stroke="#3e3e3e" stroke-width="1.1" stroke-linejoin="round"/><polygon points="8.4,9.6 10.5,7.5 10.5,13.9 8.4,16.0" fill="#8c8c8c" stroke="#3e3e3e" stroke-width="1.1" stroke-linejoin="round"/><rect x="2" y="9.6" width="6.4" height="6.4" fill="#f00" stroke="#3e3e3e" stroke-width="1.1"/><polygon points="8.4,9.6 10.5,7.5 16.900000000000002,7.5 14.8,9.6" fill="#e6e6e6" stroke="#3e3e3e" stroke-width="1.1" stroke-linejoin="round"/><polygon points="14.8,9.6 16.900000000000002,7.5 16.900000000000002,13.9 14.8,16.0" fill="#8c8c8c" stroke="#3e3e3e" stroke-width="1.1" stroke-linejoin="round"/><rect x="8.4" y="9.6" width="6.4" height="6.4" fill="#b0b0b0" stroke="#3e3e3e" stroke-width="1.1"/><polygon points="2,3.8 4.1,1.6999999999999997 10.5,1.6999999999999997 8.4,3.8" fill="#e6e6e6" stroke="#3e3e3e" stroke-width="1.1" stroke-linejoin="round"/><polygon points="8.4,3.8 10.5,1.6999999999999997 10.5,8.1 8.4,10.2" fill="#8c8c8c" stroke="#3e3e3e" stroke-width="1.1" stroke-linejoin="round"/><rect x="2" y="3.8" width="6.4" height="6.4" fill="#f00" stroke="#3e3e3e" stroke-width="1.1"/></svg>
<svg class="b" style="left:59px;top:300px;" width="14" height="14" viewBox="0 0 14 14"><path d="M2 2l10 10M12 2L2 12" stroke="#7a7a7a" stroke-width="0.9"/><circle cx="7" cy="7" r="2.1" fill="#f00"/></svg>
<svg class="b" style="left:38px;top:318px;" width="17" height="17" viewBox="0 0 17 17"><path d="M2.8 2v11.4h11" fill="none" stroke="#4a4a4a" stroke-width="1"/><path d="M2.8 .6l1.6 2.8h-3.2zM15.2 13.4l-2.8 1.6v-3.2z" fill="#4a4a4a"/><path d="M3.6 12.4c1-5 2.2-8.4 5-8.6h6" fill="none" stroke="#e11" stroke-width="1.3"/></svg>
<svg class="b" style="left:38px;top:335px;" width="17" height="17" viewBox="0 0 17 17"><defs><linearGradient id="secg" x1="0" x2="1"><stop offset="0" stop-color="#8a8a8a"/><stop offset="0.5" stop-color="#d0d0d0"/><stop offset="1" stop-color="#8a8a8a"/></linearGradient></defs>
<rect x="1.4" y="2.4" width="6" height="11.2" fill="url(#secg)" stroke="#5a5a5a" stroke-width="0.9"/><polygon points="9.8,5 14,1.6 14,12.4 9.8,15.4" fill="#e8e8e8" stroke="#5a5a5a" stroke-width="0.9"/><path d="M15.8 2.2v11.6" stroke="#5a5a5a" stroke-width="0.9"/></svg>
<svg class="b" style="left:38px;top:353px;" width="17" height="17" viewBox="0 0 17 17"><path d="M2.8 8L10 2.4M2.8 8H10M2.8 8l7.2 5.6" stroke="#5a5a5a" stroke-width="0.8"/><g fill="#a8a8a8" stroke="#5a5a5a" stroke-width="0.8"><rect x="10.2" y="0.8" width="5.4" height="4.8"/><rect x="10.2" y="5.6" width="5.4" height="4.8"/><rect x="10.2" y="10.4" width="5.4" height="4.8"/></g><circle cx="2.8" cy="8" r="2" fill="#f00"/></svg>
<svg class="b" style="left:38px;top:370px;" width="18" height="17" viewBox="0 0 18 17"><rect x="1.4" y="1.8" width="8" height="7.4" fill="#8c8c8c" stroke="#222" stroke-width="1.1"/><rect x="8.8" y="8.6" width="8" height="7.4" fill="#8c8c8c" stroke="#222" stroke-width="1.1"/><path d="M8.7 5.4v8.6M4.6 9.7h8.2M5.8 6.8l5.8 5.8M11.6 6.8l-5.8 5.8" stroke="#f00" stroke-width="1.2"/></svg>
<svg class="b" style="left:38px;top:390px;" width="17" height="17" viewBox="0 0 17 17"><path d="M2.8 2v11.4h11" fill="none" stroke="#4a4a4a" stroke-width="1"/><path d="M2.8 .6l1.6 2.8h-3.2zM15.2 13.4l-2.8 1.6v-3.2z" fill="#4a4a4a"/><path d="M3.4 12.6h2c3.2 0 2.2-8.8 5.6-8.8h4.4" fill="none" stroke="#e11" stroke-width="1.3"/></svg>
<svg class="b" style="left:39px;top:409px;" width="16" height="12" viewBox="0 0 16 12"><rect x="0.5" y="0.5" width="15" height="11" fill="#e2e2e2" stroke="#7a7a7a" stroke-width="1"/><text x="8" y="9.2" text-anchor="middle" font-family="Liberation Sans, sans-serif" font-size="9.5" font-weight="bold" fill="#e11">to</text></svg>
<svg class="b" style="left:43px;top:425px;" width="10" height="17" viewBox="0 0 10 17"><rect x="2.6" y="0.8" width="4" height="3.8" fill="#9a9a9a" stroke="#6a6a6a" stroke-width="0.8"/><rect x="2.6" y="11.6" width="4" height="3.8" fill="#9a9a9a" stroke="#6a6a6a" stroke-width="0.8"/><path d="M4.6 5v5" stroke="#e11" stroke-width="1.2"/><path d="M4.6 11l-2.4-3.4h4.8z" fill="#e11"/></svg>
<svg class="b" style="left:20px;top:443px;" width="17" height="17" viewBox="0 0 17 17"><rect x="1.2" y="4.4" width="5" height="9.6" fill="#d8d8d8" stroke="#4a4a4a" stroke-width="0.9"/><path d="M2.4 11.6h2.6" stroke="#4a4a4a" stroke-width="0.9"/><path d="M3.7 5.4v4.6" stroke="#9a9a9a" stroke-width="1.4"/><rect x="10.4" y="5" width="5" height="10" fill="#d8d8d8" stroke="#4a4a4a" stroke-width="0.9"/><path d="M11.6 12.6h2.6" stroke="#4a4a4a" stroke-width="0.9"/><path d="M12.9 6v5" stroke="#9a9a9a" stroke-width="1.4"/><rect x="5.6" y="1.4" width="5" height="9.6" fill="#d8d8d8" stroke="#4a4a4a" stroke-width="0.9"/><path d="M6.8 8.6h2.6" stroke="#4a4a4a" stroke-width="0.9"/><path d="M8.1 2.4v4.6" stroke="#9a9a9a" stroke-width="1.4"/></svg>
<svg class="b" style="left:262.5px;top:105.5px;" width="17" height="17" viewBox="0 0 17 17"><rect x="0.30" y="0.30" width="1.5" height="1.5" rx="0.5" fill="#1b4db0" opacity="0.85"/><rect x="6.45" y="0.30" width="1.5" height="1.5" rx="0.5" fill="#cfe0f4" opacity="0.85"/><rect x="12.60" y="0.30" width="1.5" height="1.5" rx="0.5" fill="#e2532e" opacity="0.85"/><rect x="2.35" y="2.35" width="1.5" height="1.5" rx="0.5" fill="#3d84e0" opacity="0.85"/><rect x="4.40" y="2.35" width="1.5" height="1.5" rx="0.5" fill="#8dbcf0" opacity="0.85"/><rect x="8.50" y="2.35" width="1.5" height="1.5" rx="0.5" fill="#f6dcc8" opacity="0.85"/><rect x="10.55" y="2.35" width="1.5" height="1.5" rx="0.5" fill="#f2a868" opacity="0.85"/><rect x="4.40" y="4.40" width="1.5" height="1.5" rx="0.5" fill="#8dbcf0" opacity="0.85"/><rect x="8.50" y="4.40" width="1.5" height="1.5" rx="0.5" fill="#f6dcc8" opacity="0.85"/><rect x="12.60" y="4.40" width="1.5" height="1.5" rx="0.5" fill="#e2532e" opacity="0.85"/><rect x="14.65" y="4.40" width="1.5" height="1.5" rx="0.5" fill="#b01212" opacity="0.85"/><rect x="0.30" y="6.45" width="1.5" height="1.5" rx="0.5" fill="#1b4db0" opacity="0.85"/><rect x="2.35" y="6.45" width="1.5" height="1.5" rx="0.5" fill="#3d84e0" opacity="0.85"/><rect x="6.45" y="6.45" width="1.5" height="1.5" rx="0.5" fill="#cfe0f4" opacity="0.85"/><rect x="10.55" y="6.45" width="1.5" height="1.5" rx="0.5" fill="#f2a868" opacity="0.85"/><rect x="4.40" y="8.50" width="1.5" height="1.5" rx="0.5" fill="#8dbcf0" opacity="0.85"/><rect x="8.50" y="8.50" width="1.5" height="1.5" rx="0.5" fill="#f6dcc8" opacity="0.85"/><rect x="10.55" y="8.50" width="1.5" height="1.5" rx="0.5" fill="#f2a868" opacity="0.85"/><rect x="14.65" y="8.50" width="1.5" height="1.5" rx="0.5" fill="#b01212" opacity="0.85"/><rect x="0.30" y="10.55" width="1.5" height="1.5" rx="0.5" fill="#1b4db0" opacity="1"/><rect x="2.35" y="10.55" width="1.5" height="1.5" rx="0.5" fill="#3d84e0" opacity="1"/><rect x="4.40" y="10.55" width="1.5" height="1.5" rx="0.5" fill="#8dbcf0" opacity="1"/><rect x="6.45" y="10.55" width="1.5" height="1.5" rx="0.5" fill="#cfe0f4" opacity="1"/><rect x="8.50" y="10.55" width="1.5" height="1.5" rx="0.5" fill="#f6dcc8" opacity="1"/><rect x="10.55" y="10.55" width="1.5" height="1.5" rx="0.5" fill="#f2a868" opacity="1"/><rect x="12.60" y="10.55" width="1.5" height="1.5" rx="0.5" fill="#e2532e" opacity="1"/><rect x="14.65" y="10.55" width="1.5" height="1.5" rx="0.5" fill="#b01212" opacity="1"/><rect x="0.30" y="12.60" width="1.5" height="1.5" rx="0.5" fill="#1b4db0" opacity="1"/><rect x="2.35" y="12.60" width="1.5" height="1.5" rx="0.5" fill="#3d84e0" opacity="1"/><rect x="4.40" y="12.60" width="1.5" height="1.5" rx="0.5" fill="#8dbcf0" opacity="1"/><rect x="6.45" y="12.60" width="1.5" height="1.5" rx="0.5" fill="#cfe0f4" opacity="1"/><rect x="8.50" y="12.60" width="1.5" height="1.5" rx="0.5" fill="#f6dcc8" opacity="1"/><rect x="10.55" y="12.60" width="1.5" height="1.5" rx="0.5" fill="#f2a868" opacity="1"/><rect x="12.60" y="12.60" width="1.5" height="1.5" rx="0.5" fill="#e2532e" opacity="1"/><rect x="14.65" y="12.60" width="1.5" height="1.5" rx="0.5" fill="#b01212" opacity="1"/><rect x="0.30" y="14.65" width="1.5" height="1.5" rx="0.5" fill="#1b4db0" opacity="0.55"/><rect x="2.35" y="14.65" width="1.5" height="1.5" rx="0.5" fill="#3d84e0" opacity="0.55"/><rect x="4.40" y="14.65" width="1.5" height="1.5" rx="0.5" fill="#8dbcf0" opacity="0.55"/><rect x="6.45" y="14.65" width="1.5" height="1.5" rx="0.5" fill="#cfe0f4" opacity="0.55"/><rect x="8.50" y="14.65" width="1.5" height="1.5" rx="0.5" fill="#f6dcc8" opacity="0.55"/><rect x="10.55" y="14.65" width="1.5" height="1.5" rx="0.5" fill="#f2a868" opacity="0.55"/><rect x="12.60" y="14.65" width="1.5" height="1.5" rx="0.5" fill="#e2532e" opacity="0.55"/><rect x="14.65" y="14.65" width="1.5" height="1.5" rx="0.5" fill="#b01212" opacity="0.55"/></svg>
<svg class="b" style="left:708px;top:108px;" width="12" height="12" viewBox="0 0 12 12"><path d="M1.2 1.2l9.6 9.6M10.8 1.2l-9.6 9.6" stroke="#7a7a7a" stroke-width="1" fill="none"/></svg>
<svg class="b" style="left:697px;top:197px;" width="11" height="8" viewBox="0 0 11 8"><path d="M5.2 1l4.3 5.6h-8.6z" fill="#a0a0a0" stroke="#a0a0a0" stroke-width="0.6" stroke-linejoin="round"/></svg>
<svg class="b" style="left:697px;top:227px;" width="11" height="8" viewBox="0 0 11 8"><path d="M5.2 7l4.3-5.6h-8.6z" fill="#a0a0a0" stroke="#a0a0a0" stroke-width="0.6" stroke-linejoin="round"/></svg>
<svg class="b" style="left:474px;top:320px;" width="14" height="14" viewBox="0 0 14 14"><path d="M2.4 5.9h4.8v-3.7l5.2 5.1-5.2 5.2v-3.7h-4.8z" fill="#4a4a4a"/></svg>
<svg class="b" style="left:693px;top:320px;" width="14" height="14" viewBox="0 0 14 14"><path d="M7.3 1.4l5.1 6h-3.6v4h-3.1v-4h-3.5z" fill="#4a4a4a"/></svg>
<svg class="b" style="left:693px;top:350.5px;" width="14" height="14" viewBox="0 0 14 14"><path d="M7.3 12.4l5.1-6h-3.6v-4h-3.1v4h-3.5z" fill="#4a4a4a"/></svg>
<svg class="b" style="left:689px;top:376px;" width="22" height="22" viewBox="0 0 22 22"><g fill="#333" stroke="#333" stroke-width="0.5" stroke-linejoin="round"><path d="M5.1 5.7L17.7 16.5L7.1 3.7Z"/><circle cx="6.1" cy="4.7" r="1.2"/><path d="M5.3 16.3L16.1 4.1L3.3 14.3Z"/><circle cx="4.3" cy="15.3" r="1.2"/></g></svg>
<svg class="b" style="left:286px;top:538px;" width="10" height="8" viewBox="0 0 10 8"><path d="M1.2 1.6l3.8 3.8 3.8-3.8" fill="none" stroke="#333" stroke-width="1.3"/></svg>
<div class="b" style="left:287px;top:332px;width:1px;height:117px;background-image:repeating-linear-gradient(180deg,#9a9a9a 0 1px,transparent 1px 2px);"></div>
<div class="b" style="left:283.0px;top:323.0px;width:9px;height:9px;background:linear-gradient(135deg,#fff,#e4e4e4);border:1px solid #919191;border-radius:1px;"></div>
<div class="b" style="left:285.0px;top:327.0px;width:5px;height:1px;background:#3c55a5;"></div>
<div class="b" style="left:283.0px;top:377.0px;width:9px;height:9px;background:linear-gradient(135deg,#fff,#e4e4e4);border:1px solid #919191;border-radius:1px;"></div>
<div class="b" style="left:285.0px;top:381.0px;width:5px;height:1px;background:#3c55a5;"></div>
<div class="b" style="left:283.0px;top:413.0px;width:9px;height:9px;background:linear-gradient(135deg,#fff,#e4e4e4);border:1px solid #919191;border-radius:1px;"></div>
<div class="b" style="left:285.0px;top:417.0px;width:5px;height:1px;background:#3c55a5;"></div>
<div class="b" style="left:283.0px;top:449.0px;width:9px;height:9px;background:linear-gradient(135deg,#fff,#e4e4e4);border:1px solid #919191;border-radius:1px;"></div>
<div class="b" style="left:285.0px;top:453.0px;width:5px;height:1px;background:#3c55a5;"></div>
<div class="b" style="left:293px;top:327px;width:4px;height:1px;background-image:repeating-linear-gradient(90deg,#9a9a9a 0 1px,transparent 1px 2px);"></div>
<div class="b" style="left:293px;top:381px;width:4px;height:1px;background-image:repeating-linear-gradient(90deg,#9a9a9a 0 1px,transparent 1px 2px);"></div>
<div class="b" style="left:293px;top:417px;width:4px;height:1px;background-image:repeating-linear-gradient(90deg,#9a9a9a 0 1px,transparent 1px 2px);"></div>
<div class="b" style="left:293px;top:453px;width:4px;height:1px;background-image:repeating-linear-gradient(90deg,#9a9a9a 0 1px,transparent 1px 2px);"></div>
<div class="b" style="left:306px;top:335px;width:1px;height:29px;background-image:repeating-linear-gradient(180deg,#9a9a9a 0 1px,transparent 1px 2px);"></div>
<div class="b" style="left:307px;top:345px;width:8px;height:1px;background-image:repeating-linear-gradient(90deg,#9a9a9a 0 1px,transparent 1px 2px);"></div>
<div class="b" style="left:307px;top:363px;width:8px;height:1px;background-image:repeating-linear-gradient(90deg,#9a9a9a 0 1px,transparent 1px 2px);"></div>
<div class="b" style="left:306px;top:389px;width:1px;height:11px;background-image:repeating-linear-gradient(180deg,#9a9a9a 0 1px,transparent 1px 2px);"></div>
<div class="b" style="left:307px;top:399px;width:8px;height:1px;background-image:repeating-linear-gradient(90deg,#9a9a9a 0 1px,transparent 1px 2px);"></div>
<div class="b" style="left:306px;top:425px;width:1px;height:11px;background-image:repeating-linear-gradient(180deg,#9a9a9a 0 1px,transparent 1px 2px);"></div>
<div class="b" style="left:307px;top:435px;width:8px;height:1px;background-image:repeating-linear-gradient(90deg,#9a9a9a 0 1px,transparent 1px 2px);"></div>
<div class="b" style="left:306px;top:461px;width:1px;height:37px;background-image:repeating-linear-gradient(180deg,#9a9a9a 0 1px,transparent 1px 2px);"></div>
<div class="b" style="left:307px;top:471px;width:8px;height:1px;background-image:repeating-linear-gradient(90deg,#9a9a9a 0 1px,transparent 1px 2px);"></div>
<div class="b" style="left:307px;top:489px;width:8px;height:1px;background-image:repeating-linear-gradient(90deg,#9a9a9a 0 1px,transparent 1px 2px);"></div>
<svg class="b" style="left:162px;top:74px;" width="6" height="4" viewBox="0 0 6 4"><path d="M0 0h5.4l-2.7 3.2z" fill="#5a5a5a"/></svg>
<svg class="b" style="left:334.5px;top:74px;" width="6" height="4" viewBox="0 0 6 4"><path d="M0 0h5.4l-2.7 3.2z" fill="#5a5a5a"/></svg>
<svg class="b" style="left:480.5px;top:74px;" width="6" height="4" viewBox="0 0 6 4"><path d="M0 0h5.4l-2.7 3.2z" fill="#5a5a5a"/></svg>
<svg class="b" style="left:-4.5px;top:-7px;" width="17" height="17" viewBox="0 0 17 17"><rect x="0.30" y="0.30" width="1.5" height="1.5" rx="0.5" fill="#1b4db0" opacity="0.85"/><rect x="6.45" y="0.30" width="1.5" height="1.5" rx="0.5" fill="#cfe0f4" opacity="0.85"/><rect x="12.60" y="0.30" width="1.5" height="1.5" rx="0.5" fill="#e2532e" opacity="0.85"/><rect x="2.35" y="2.35" width="1.5" height="1.5" rx="0.5" fill="#3d84e0" opacity="0.85"/><rect x="4.40" y="2.35" width="1.5" height="1.5" rx="0.5" fill="#8dbcf0" opacity="0.85"/><rect x="8.50" y="2.35" width="1.5" height="1.5" rx="0.5" fill="#f6dcc8" opacity="0.85"/><rect x="10.55" y="2.35" width="1.5" height="1.5" rx="0.5" fill="#f2a868" opacity="0.85"/><rect x="4.40" y="4.40" width="1.5" height="1.5" rx="0.5" fill="#8dbcf0" opacity="0.85"/><rect x="8.50" y="4.40" width="1.5" height="1.5" rx="0.5" fill="#f6dcc8" opacity="0.85"/><rect x="12.60" y="4.40" width="1.5" height="1.5" rx="0.5" fill="#e2532e" opacity="0.85"/><rect x="14.65" y="4.40" width="1.5" height="1.5" rx="0.5" fill="#b01212" opacity="0.85"/><rect x="0.30" y="6.45" width="1.5" height="1.5" rx="0.5" fill="#1b4db0" opacity="0.85"/><rect x="2.35" y="6.45" width="1.5" height="1.5" rx="0.5" fill="#3d84e0" opacity="0.85"/><rect x="6.45" y="6.45" width="1.5" height="1.5" rx="0.5" fill="#cfe0f4" opacity="0.85"/><rect x="10.55" y="6.45" width="1.5" height="1.5" rx="0.5" fill="#f2a868" opacity="0.85"/><rect x="4.40" y="8.50" width="1.5" height="1.5" rx="0.5" fill="#8dbcf0" opacity="0.85"/><rect x="8.50" y="8.50" width="1.5" height="1.5" rx="0.5" fill="#f6dcc8" opacity="0.85"/><rect x="10.55" y="8.50" width="1.5" height="1.5" rx="0.5" fill="#f2a868" opacity="0.85"/><rect x="14.65" y="8.50" width="1.5" height="1.5" rx="0.5" fill="#b01212" opacity="0.85"/><rect x="0.30" y="10.55" width="1.5" height="1.5" rx="0.5" fill="#1b4db0" opacity="1"/><rect x="2.35" y="10.55" width="1.5" height="1.5" rx="0.5" fill="#3d84e0" opacity="1"/><rect x="4.40" y="10.55" width="1.5" height="1.5" rx="0.5" fill="#8dbcf0" opacity="1"/><rect x="6.45" y="10.55" width="1.5" height="1.5" rx="0.5" fill="#cfe0f4" opacity="1"/><rect x="8.50" y="10.55" width="1.5" height="1.5" rx="0.5" fill="#f6dcc8" opacity="1"/><rect x="10.55" y="10.55" width="1.5" height="1.5" rx="0.5" fill="#f2a868" opacity="1"/><rect x="12.60" y="10.55" width="1.5" height="1.5" rx="0.5" fill="#e2532e" opacity="1"/><rect x="14.65" y="10.55" width="1.5" height="1.5" rx="0.5" fill="#b01212" opacity="1"/><rect x="0.30" y="12.60" width="1.5" height="1.5" rx="0.5" fill="#1b4db0" opacity="1"/><rect x="2.35" y="12.60" width="1.5" height="1.5" rx="0.5" fill="#3d84e0" opacity="1"/><rect x="4.40" y="12.60" width="1.5" height="1.5" rx="0.5" fill="#8dbcf0" opacity="1"/><rect x="6.45" y="12.60" width="1.5" height="1.5" rx="0.5" fill="#cfe0f4" opacity="1"/><rect x="8.50" y="12.60" width="1.5" height="1.5" rx="0.5" fill="#f6dcc8" opacity="1"/><rect x="10.55" y="12.60" width="1.5" height="1.5" rx="0.5" fill="#f2a868" opacity="1"/><rect x="12.60" y="12.60" width="1.5" height="1.5" rx="0.5" fill="#e2532e" opacity="1"/><rect x="14.65" y="12.60" width="1.5" height="1.5" rx="0.5" fill="#b01212" opacity="1"/><rect x="0.30" y="14.65" width="1.5" height="1.5" rx="0.5" fill="#1b4db0" opacity="0.55"/><rect x="2.35" y="14.65" width="1.5" height="1.5" rx="0.5" fill="#3d84e0" opacity="0.55"/><rect x="4.40" y="14.65" width="1.5" height="1.5" rx="0.5" fill="#8dbcf0" opacity="0.55"/><rect x="6.45" y="14.65" width="1.5" height="1.5" rx="0.5" fill="#cfe0f4" opacity="0.55"/><rect x="8.50" y="14.65" width="1.5" height="1.5" rx="0.5" fill="#f6dcc8" opacity="0.55"/><rect x="10.55" y="14.65" width="1.5" height="1.5" rx="0.5" fill="#f2a868" opacity="0.55"/><rect x="12.60" y="14.65" width="1.5" height="1.5" rx="0.5" fill="#e2532e" opacity="0.55"/><rect x="14.65" y="14.65" width="1.5" height="1.5" rx="0.5" fill="#b01212" opacity="0.55"/></svg>
</body></html>
